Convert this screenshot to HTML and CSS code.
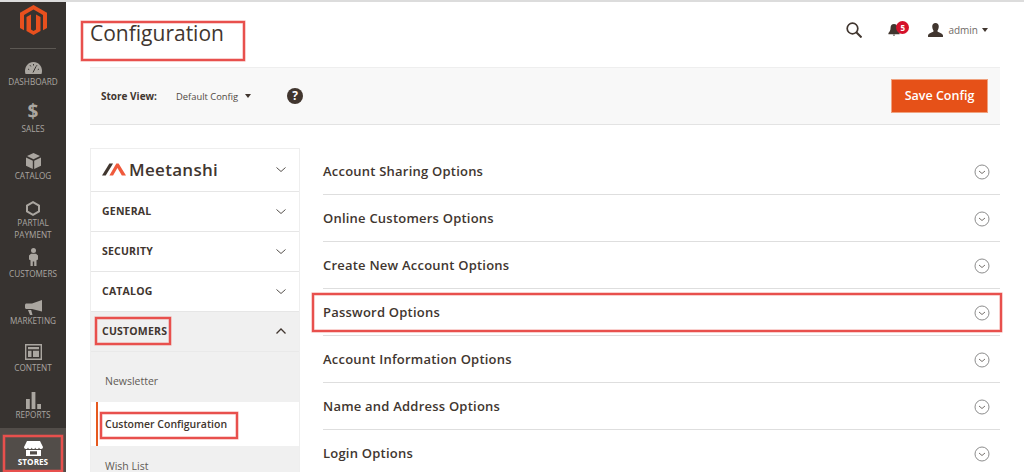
FILE: index.html
```html
<!DOCTYPE html>
<html lang="en">
<head>
<meta charset="utf-8">
<title>Configuration</title>
<link rel="stylesheet" href="styles.css">
</head>
<body>
<div class="app">
  <nav class="side">
    <div class="logo">
      <svg width="27" height="30" viewBox="0 0 27 30"><path fill="#e8501e" d="M13.500 0 27 7.800V23l-4 2.300V10L13.500 4.600 4 10V25.300L0 23V7.800z"/><path fill="#e8501e" d="M6.500 12l4.500-2.600V24.500l2.500 1.500 2.500-1.500V9.400L20.500 12V26l-7 4-7-4z"/></svg>
    </div>
    <div class="item">
      <span class="slot"><svg width="17" height="12" viewBox="0 0 17 12"><path fill="#aaa6a0" d="M8.500 0C3.500 0 0 4 0 9c0 1 .2 2 .5 3h16c.3-1 .5-2 .5-3 0-5-3.500-9-8.500-9z"/><path fill="none" stroke="#373330" d="M8 10.500 11 4.500M3 7l1.200.7M14 7l-1.200.7M8.500 2v1.500M5 3.200l.8 1.200M12 3.200l-.8 1.200"/></svg></span>
      <span>DASHBOARD</span>
    </div>
    <div class="item">
      <span class="slot"><span class="dollar">$</span></span>
      <span>SALES</span>
    </div>
    <div class="item">
      <span class="slot slot-mid"><svg width="15" height="16" viewBox="0 0 15 16"><path fill="#aaa6a0" d="M7.500 0 14 3 7.500 6.200 1 3zM0 4.500l6.800 3.200V16L0 12.800zM15 4.500v8.300L8.200 16V7.700z"/></svg></span>
      <span>CATALOG</span>
    </div>
    <div class="item item-two">
      <span class="slot slot-mid"><svg width="14" height="15" viewBox="0 0 14 15"><path fill="none" stroke="#aaa6a0" stroke-width="2" d="M7 1.200l6 3.400v5.800l-6 3.400-6-3.400V4.600z"/></svg></span>
      <span>PARTIAL<br>PAYMENT</span>
    </div>
    <div class="item">
      <span class="slot"><svg width="9" height="18" viewBox="0 0 9 18"><circle cx="4.500" cy="2.600" r="2.500" fill="#aaa6a0"/><path fill="#aaa6a0" d="M2 5.800h5L9 7.500v4l-1.500.8V18H5.200v-4.500H3.800V18H1.500v-5.700L0 11.500v-4z"/></svg></span>
      <span>CUSTOMERS</span>
    </div>
    <div class="item">
      <span class="slot slot-low"><svg width="17" height="15" viewBox="0 0 17 15"><path fill="#aaa6a0" d="M17 0v11.500L7 9H1.500C.7 9 0 8.300 0 7.500V5c0-.8.700-1.500 1.500-1.500H7z"/><path fill="#aaa6a0" d="M3 10h3.200L7.500 15H5z"/></svg></span>
      <span>MARKETING</span>
    </div>
    <div class="item">
      <span class="slot"><svg width="17" height="16" viewBox="0 0 17 16"><path fill="none" stroke="#aaa6a0" stroke-width="1.400" d="M.7.700h15.600v14.600H.7z"/><path fill="#aaa6a0" d="M3 3h11v2.200H3zM3 6.700h3.500V13H3zM8 6.700h6V13H8z"/></svg></span>
      <span>CONTENT</span>
    </div>
    <div class="item">
      <span class="slot slot-low"><svg width="15" height="17" viewBox="0 0 15 17"><path fill="#aaa6a0" d="M0 7h3.800v10H0zM5.600 0h3.800v17H5.600zM11.200 12H15v5h-3.800z"/></svg></span>
      <span>REPORTS</span>
    </div>
    <div class="item item-on">
      <span class="slot slot-low"><svg width="19" height="15" viewBox="0 0 19 15"><path fill="#fff" d="M3 0h13l3 6c0 1.300-.8 2-1.800 2S15.300 7.300 15 6.400c-.3.900-1 1.600-1.900 1.600s-1.600-.7-1.800-1.600c-.3.900-1 1.600-1.800 1.600s-1.500-.7-1.800-1.600C7.500 7.300 6.800 8 5.900 8S4.300 7.300 4 6.400C3.700 7.300 2.900 8 1.900 8S0 7.300 0 6z"/><path fill="#fff" fill-rule="evenodd" d="M2 9h15v6H2zm4 1.300v3.200h7v-3.200z"/></svg></span>
      <span>STORES</span>
    </div>
  </nav>

  <main class="main">
    <header class="top">
      <h1>Configuration</h1>
      <div class="tools">
        <svg class="search" width="16" height="16" viewBox="0 0 16 16"><circle cx="6.500" cy="6.500" r="5.300" fill="none" stroke="#41362f" stroke-width="1.700"/><path stroke="#41362f" stroke-width="2" d="M10.300 10.300l5.200 5.200"/></svg>
        <div class="bell">
          <svg width="12" height="12" viewBox="0 0 14 14"><path fill="#41362f" d="M7 0c2.700 0 4 2 4 4.500 0 3 1 4.500 2.500 6V12H.5v-1.500C2 9 3 7.500 3 4.500 3 2 4.300 0 7 0zM5.500 12.500h3L7 14z"/></svg>
          <b>5</b>
        </div>
        <div class="user">
          <svg width="15" height="14" viewBox="0 0 16 15"><path fill="#41362f" d="M8 0c2.200 0 3.500 1.600 3.500 3.800S10.400 8 10 8.500c0 1.500 5.500 2 6 4.500v2H0v-2c.5-2.500 6-3 6-4.500-.4-.5-1.500-2.500-1.500-4.700S5.800 0 8 0z"/></svg>
          <span>admin</span>
          <i class="caret"></i>
        </div>
      </div>
    </header>

    <div class="bar">
      <strong>Store View:</strong>
      <span class="scope">Default Config</span>
      <i class="caret caret-dark"></i>
      <span class="help">?</span>
      <button class="save" type="button">Save Config</button>
    </div>

    <div class="cols">
      <aside class="tabs">
        <div class="tab tab-brand">
          <span class="brand">
            <svg width="24" height="15" viewBox="0 0 26 15"><path fill="#41362f" d="M0 14 8 1h4L4 14z"/><path fill="#ef5a3c" d="M8 14 15.500 1h2.500L26 14h-4.500L16.700 6 12 14z"/></svg>
            <span>Meetanshi</span>
          </span>
          <svg class="chev" width="10" height="5" viewBox="0 0 10 5"><path fill="none" stroke="#55504c" d="M.5.500 5 4.500 9.500.5"/></svg>
        </div>
        <div class="tab"><b>GENERAL</b><svg class="chev" width="10" height="5" viewBox="0 0 10 5"><path fill="none" stroke="#55504c" d="M.5.500 5 4.500 9.500.5"/></svg></div>
        <div class="tab"><b>SECURITY</b><svg class="chev" width="10" height="5" viewBox="0 0 10 5"><path fill="none" stroke="#55504c" d="M.5.500 5 4.500 9.500.5"/></svg></div>
        <div class="tab"><b>CATALOG</b><svg class="chev" width="10" height="5" viewBox="0 0 10 5"><path fill="none" stroke="#55504c" d="M.5.500 5 4.500 9.500.5"/></svg></div>
        <div class="tab tab-open"><b>CUSTOMERS</b><svg class="chev" width="10" height="6" viewBox="0 0 10 6"><path fill="none" stroke="#41362f" stroke-width="1.300" d="M.5 5.500 5 1l4.500 4.500"/></svg></div>
        <div class="sub">Newsletter</div>
        <div class="sub sub-on">Customer Configuration</div>
        <div class="sub sub-last">Wish List</div>
      </aside>

      <section class="rows">
        <div class="row"><span>Account Sharing Options</span><svg class="circ" width="16" height="16" viewBox="0 0 16 16"><circle cx="8" cy="8" r="7" fill="none" stroke="#8d8d8d"/><path fill="none" stroke="#77726e" d="M5 7l3 2.500L11 7"/></svg></div>
        <div class="row"><span>Online Customers Options</span><svg class="circ" width="16" height="16" viewBox="0 0 16 16"><circle cx="8" cy="8" r="7" fill="none" stroke="#8d8d8d"/><path fill="none" stroke="#77726e" d="M5 7l3 2.500L11 7"/></svg></div>
        <div class="row"><span>Create New Account Options</span><svg class="circ" width="16" height="16" viewBox="0 0 16 16"><circle cx="8" cy="8" r="7" fill="none" stroke="#8d8d8d"/><path fill="none" stroke="#77726e" d="M5 7l3 2.500L11 7"/></svg></div>
        <div class="row"><span>Password Options</span><svg class="circ" width="16" height="16" viewBox="0 0 16 16"><circle cx="8" cy="8" r="7" fill="none" stroke="#8d8d8d"/><path fill="none" stroke="#77726e" d="M5 7l3 2.500L11 7"/></svg></div>
        <div class="row"><span>Account Information Options</span><svg class="circ" width="16" height="16" viewBox="0 0 16 16"><circle cx="8" cy="8" r="7" fill="none" stroke="#8d8d8d"/><path fill="none" stroke="#77726e" d="M5 7l3 2.500L11 7"/></svg></div>
        <div class="row"><span>Name and Address Options</span><svg class="circ" width="16" height="16" viewBox="0 0 16 16"><circle cx="8" cy="8" r="7" fill="none" stroke="#8d8d8d"/><path fill="none" stroke="#77726e" d="M5 7l3 2.500L11 7"/></svg></div>
        <div class="row"><span>Login Options</span><svg class="circ" width="16" height="16" viewBox="0 0 16 16"><circle cx="8" cy="8" r="7" fill="none" stroke="#8d8d8d"/><path fill="none" stroke="#77726e" d="M5 7l3 2.500L11 7"/></svg></div>
      </section>
    </div>
  </main>

  <div class="mark mark-title"></div>
  <div class="mark mark-stores"></div>
  <div class="mark mark-customers"></div>
  <div class="mark mark-config"></div>
  <div class="mark mark-password"></div>
</div>
</body>
</html>
```

FILE: styles.css
```css
* { box-sizing: border-box; }
html, body { margin: 0; height: 100%; overflow: hidden; background: #fff; }
body { font-family: "Open Sans", "Noto Sans", sans-serif; color: #41362f; }

.app { position: relative; display: flex; width: 1024px; height: 472px; overflow: hidden; border-top: 2px solid #dcdcdc; }

.side { flex: none; width: 66px; height: 470px; background: #373330; display: flex; flex-direction: column; align-items: stretch; }
.logo { flex: none; height: 47px; margin: 0 10px 4px; padding-top: 3px; display: flex; justify-content: center; align-items: flex-start; border-bottom: 1px solid #5c5853; }
.item { flex: none; height: 47px; display: flex; flex-direction: column; align-items: center; color: #aaa6a0; font-size: 8.200px; line-height: 12px; text-align: center; }
.item-two { height: 51px; }
.item-on { height: 44px; margin-top: -5px; padding-top: 5px; background: #524d49; color: #fff; font-weight: 700; }
.slot { flex: none; height: 23px; padding-bottom: 2px; display: flex; align-items: flex-end; justify-content: center; }
.slot-mid { padding-bottom: 1px; }
.slot-low { padding-bottom: 0; }
.dollar { font-size: 19px; line-height: 19px; font-weight: 700; color: #aaa6a0; }

.main { flex: 1; min-width: 0; padding: 0 24px; }
.top { height: 65px; display: flex; justify-content: space-between; align-items: flex-start; }
h1 { margin: 15px 0 0; font-size: 21px; line-height: 32px; font-weight: 400; color: #41362f; }
.tools { display: flex; align-items: center; margin: 20px 12px 0 0; }
.search { margin-right: 26px; }
.bell { position: relative; display: flex; margin-right: 28px; }
.bell b { position: absolute; left: 8px; top: -3px; width: 13px; height: 13px; border-radius: 50%; background: #d5112b; color: #fff; font-size: 8px; line-height: 13px; text-align: center; }
.user { display: flex; align-items: center; font-size: 10px; color: #6f6a66; }
.user span { margin-left: 5px; }
.caret { display: inline-block; width: 0; height: 0; border: 3px solid transparent; border-top: 4px solid #41362f; border-bottom: 0; margin-left: 4px; }

.bar { height: 58px; display: flex; align-items: center; background: #f8f8f8; border-top: 1px solid #eee; border-bottom: 1px solid #e3e3e3; padding: 0 12px 0 11px; font-size: 10px; }
.bar strong { font-weight: 700; color: #41362f; }
.scope { margin-left: 19px; color: #514943; font-size: 9.400px; }
.caret-dark { margin-left: 7px; }
.help { width: 16px; height: 16px; margin-left: 36px; border-radius: 50%; background: #41362f; color: #fff; font-size: 12px; line-height: 16px; font-weight: 700; text-align: center; }
.save { margin-left: auto; width: 97px; height: 34px; border: 1px solid #f0a27f; background: #e65118; color: #fff; font: 600 12.500px/1 "Open Sans", sans-serif; }

.cols { display: flex; margin-top: 23px; }
.tabs { flex: none; width: 210px; margin-right: 23px; border: 1px solid #eee; border-bottom: 0; }
.tab { display: flex; justify-content: space-between; align-items: center; height: 40px; padding: 0 13px 1px 11px; border-bottom: 1px solid #e6e6e6; }
.tab b { font-size: 10.500px; font-weight: 700; letter-spacing: .2px; color: #41362f; }
.tab-brand { height: 43px; }
.brand { display: flex; align-items: center; gap: 3px; font-size: 17px; font-weight: 600; color: #41362f; letter-spacing: .3px; }
.tab-open { background: #f0f0f0; border-bottom-color: #e9e9e9; }
.sub { height: 50px; padding: 8px 0 0 14px; display: flex; align-items: center; background: #f0f0f0; color: #605a55; font-size: 10.500px; }
.sub-on { position: relative; height: 44px; padding-top: 0; background: #fff; color: #41362f; font-weight: 600; }
.sub-on::before { content: ""; position: absolute; left: 5px; top: 0; bottom: 0; width: 2px; background: #e6591f; }
.sub-last { height: 26px; padding-top: 15px; line-height: 11px; }

.rows { flex: 1; min-width: 0; }
.row { display: flex; justify-content: space-between; align-items: center; height: 47px; padding-right: 10px; border-bottom: 1px solid #dedede; font-size: 13px; font-weight: 600; letter-spacing: .22px; color: #41362f; }
.circ { position: relative; top: 1px; }

.mark { position: absolute; border: 2px solid #e8504d; box-shadow: 0 0 0 .5px rgba(233, 83, 79, .55), inset 0 0 0 .5px rgba(233, 83, 79, .55); pointer-events: none; }
.mark-title { left: 81px; top: 19px; width: 164px; height: 40px; }
.mark-stores { left: 3px; top: 433px; width: 60px; height: 37px; }
.mark-customers { left: 95px; top: 315px; width: 76px; height: 28px; }
.mark-config { left: 100px; top: 410px; width: 138px; height: 27px; }
.mark-password { left: 312px; top: 291px; width: 690px; height: 39px; }
```
